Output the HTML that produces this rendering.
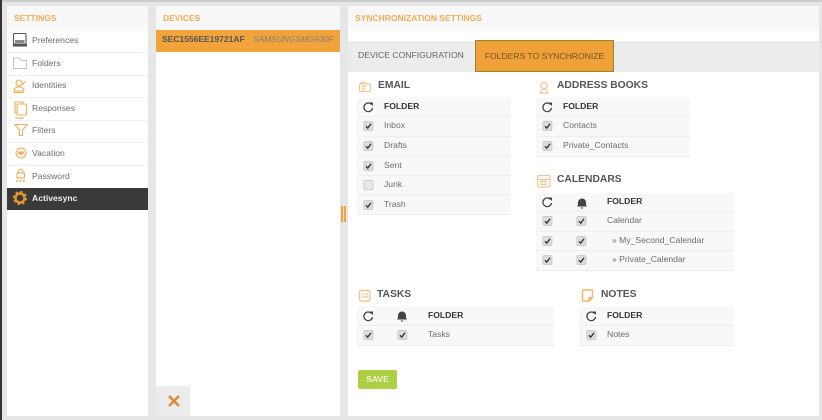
<!DOCTYPE html>
<html>
<head>
<meta charset="utf-8">
<style>
html,body{margin:0;padding:0}
body{width:822px;height:420px;overflow:hidden;position:relative;background:#e6e6e6;font-family:"Liberation Sans",sans-serif;font-size:9px;color:#666}
#w{position:absolute;left:0;top:0;width:822px;height:420px;overflow:hidden;background:#e6e6e6;filter:blur(.35px)}
.a{position:absolute}
.p{position:absolute;background:#fff}
.hd{position:absolute;background:#f8f8f8;height:24px;top:6px;color:#f4ab52;font-weight:bold;font-size:8.5px;line-height:24px}
.m{position:absolute;left:7px;width:141px;height:22px;border-bottom:1px solid #f0f0f0;line-height:21px;color:#6c6c6c;font-size:8.6px}
.m span{position:absolute;left:25px}
.r{position:absolute;background:#f8f8f8;border-bottom:1px solid #eee;box-sizing:border-box}
.t{position:absolute;line-height:12px;white-space:nowrap;font-size:8.6px;color:#6c6c6c}
.f{position:absolute;line-height:12px;font-weight:bold;font-size:8.6px;color:#333}
.h{position:absolute;line-height:14px;font-weight:bold;font-size:10.3px;color:#555;white-space:nowrap}
.c{position:absolute;width:8px;height:8px;background:#ddd;border:.5px solid #ccc;border-radius:2px;transform:translate(-.6px,-1px)}
.c svg{position:absolute;left:0;top:0}
svg{position:absolute;overflow:visible}
</style>
</head>
<body>
<div id="w">
<div class="a" style="left:0;top:0;width:822px;height:2px;background:#ccc"></div>
<div class="a" style="left:0;top:0;width:2px;height:420px;background:#333"></div>

<!-- Settings panel -->
<div class="p" style="left:7px;top:6px;width:141px;height:410px"></div>
<div class="hd" style="left:7px;width:141px;text-indent:7px">SETTINGS</div>
<div class="m" style="top:30px"><span>Preferences</span></div>
<div class="m" style="top:52.6px"><span>Folders</span></div>
<div class="m" style="top:75.2px"><span>Identities</span></div>
<div class="m" style="top:97.8px"><span>Responses</span></div>
<div class="m" style="top:120.4px"><span>Filters</span></div>
<div class="m" style="top:143px"><span>Vacation</span></div>
<div class="m" style="top:165.6px"><span>Password</span></div>
<div class="a" style="left:7px;top:188px;width:141px;height:22px;background:#3a3a3a;color:#eee;font-weight:bold;line-height:20px;font-size:8.6px"><span class="a" style="left:25px">Activesync</span></div>

<!-- left icons -->
<svg style="left:0;top:0" width="160" height="215">
  <g fill="none" stroke="#555" stroke-width="1.100">
    <rect x="13.500" y="33.500" width="12.500" height="10.500" rx="1"/>
    <rect x="13.500" y="44.500" width="13" height="1.500" fill="#555"/>
  </g>
  <rect x="15" y="40" width="9.500" height="3" fill="#888"/>
  <path d="M13.500 58h6l2 2.500h5v8h-13z" fill="none" stroke="#c4c4c4" stroke-width="1"/>
  <g fill="none" stroke="#f4ab52" stroke-width="1.100">
    <circle cx="19" cy="83" r="3"/>
    <path d="M14 91c0-3 2-4 5-4s5 1 5 4zM22 85l4-4"/>
    <path d="M14 92.500h10"/>
    <rect x="17" y="104" width="9.500" height="11" rx="1.500"/>
    <path d="M17 113h-2v-11h8v2"/>
    <path d="M15 118h9"/>
    <path d="M15 124.500h12l-4.500 6v5h-3v-5z"/>
    <circle cx="21" cy="153" r="5"/>
    <path d="M18.500 152a2.500 2.500 0 0 0 5 0z" fill="#f4ab52"/>
    <rect x="17" y="173" width="7.500" height="5" fill="none"/>
    <path d="M18.500 173v-1.500a2.200 2.200 0 0 1 4.400 0v1.500"/>
  </g>
  <g fill="#f4ab52">
    <circle cx="17" cy="181" r="1"/><circle cx="20.500" cy="181" r="1"/><circle cx="24" cy="181" r="1"/>
  </g>
  <circle cx="20" cy="198" r="4.500" fill="none" stroke="#e6962f" stroke-width="2.400"/>
  <circle cx="20" cy="198" r="6.300" fill="none" stroke="#e6962f" stroke-width="1.600" stroke-dasharray="2.500 2.450"/>
</svg>

<!-- Devices panel -->
<div class="p" style="left:156px;top:6px;width:184px;height:410px"></div>
<div class="hd" style="left:156px;width:184px;text-indent:7px">DEVICES</div>
<div class="a" style="left:156px;top:30px;width:184px;height:22px;background:#f2a33c;line-height:18px;white-space:nowrap">
  <span class="a" style="left:6px;font-weight:bold;font-size:8.5px;color:#555">SEC1556EE19721AF</span>
  <span class="a" style="left:97px;font-style:italic;font-size:8.4px;color:#857f74">SAMSUNGSMG930F</span>
</div>
<div class="a" style="left:156px;top:386px;width:34px;height:30px;background:#ececec"></div>
<svg style="left:156px;top:386px" width="34" height="30"><path d="M13 10l10 10M23 10l-10 10" stroke="#d98f3a" stroke-width="2.600" fill="none"/></svg>
<div class="a" style="left:341px;top:206px;width:1.500px;height:16px;background:#f2a33c"></div>
<div class="a" style="left:344px;top:206px;width:1.500px;height:16px;background:#f2a33c"></div>

<!-- Main panel -->
<div class="p" style="left:348px;top:6px;width:471px;height:410px"></div>
<div class="hd" style="left:348px;width:471px;text-indent:7px">SYNCHRONIZATION SETTINGS</div>
<div class="a" style="left:348px;top:41px;width:471px;height:31px;background:#ececec"></div>
<div class="a" style="left:358px;top:49px;line-height:12px;font-size:8.6px;color:#666">DEVICE CONFIGURATION</div>
<div class="a" style="left:475px;top:40px;height:30px;background:#f0a138;border:1px solid #9a8436;width:137px;line-height:30px;text-align:center;font-size:8.6px;color:#6a5530">FOLDERS TO SYNCHRONIZE</div>

<!-- Section icons -->
<svg style="left:0;top:0" width="822" height="420">
  <g fill="none" stroke="#f7c48a" stroke-width="1.200">
    <rect x="359.500" y="84" width="11" height="7.500" rx="1"/>
    <path d="M361.500 86.500h5M361.500 89h4M360 84l1-1.500h4l1 1.500"/>
    <circle cx="544" cy="85.500" r="3.200"/>
    <path d="M540 93c1-3 2-4 4-4s3 1 4 4z"/>
    <rect x="537.500" y="175.500" width="12.500" height="11.500" rx="1.500"/>
    <path d="M537.500 179.500h12.500M541 181.500h5v3h-5z"/>
    <rect x="359.500" y="290.500" width="10.500" height="10.500" rx="1.500" stroke-width="1.400"/>
    <path d="M362 294h2M365 294h3M362 297h6"/>
    <path d="M582.500 290h10v7.500l-3.500 3.500h-6.500z" stroke="#f7b56a" stroke-width="1.500"/>
    <path d="M589 301l3.500-3.500h-3.500z" fill="#f7b56a" stroke="#f7b56a"/>
  </g>
</svg>
<div class="h" style="left:378px;top:79px">EMAIL</div>
<div class="h" style="left:557px;top:79px">ADDRESS BOOKS</div>
<div class="h" style="left:557px;top:173px">CALENDARS</div>
<div class="h" style="left:377px;top:288px">TASKS</div>
<div class="h" style="left:601px;top:288px">NOTES</div>

<!-- Table backgrounds -->
<div class="r" style="left:357px;top:98px;width:154px;height:19px"></div>
<div class="r" style="left:357px;top:117px;width:154px;height:20px"></div>
<div class="r" style="left:357px;top:137px;width:154px;height:19px"></div>
<div class="r" style="left:357px;top:156px;width:154px;height:20px"></div>
<div class="r" style="left:357px;top:176px;width:154px;height:19px"></div>
<div class="r" style="left:357px;top:195px;width:154px;height:20px"></div>

<div class="r" style="left:536px;top:98px;width:154px;height:19px"></div>
<div class="r" style="left:536px;top:117px;width:154px;height:20px"></div>
<div class="r" style="left:536px;top:137px;width:154px;height:20px"></div>

<div class="r" style="left:536px;top:193px;width:198px;height:19px"></div>
<div class="r" style="left:536px;top:212px;width:198px;height:20px"></div>
<div class="r" style="left:536px;top:232px;width:198px;height:19px"></div>
<div class="r" style="left:536px;top:251px;width:198px;height:20px"></div>

<div class="r" style="left:357px;top:307px;width:197px;height:19px"></div>
<div class="r" style="left:357px;top:326px;width:197px;height:20px"></div>
<div class="r" style="left:579px;top:307px;width:155px;height:19px"></div>
<div class="r" style="left:579px;top:326px;width:155px;height:20px"></div>

<!-- Sync and bell icons -->
<svg style="left:0;top:0" width="822" height="420">
  <g fill="none" stroke="#444" stroke-width="1.300">
    <path d="M371.500 104.500a4.300 4.300 0 1 0 1 3.500"/>
    <path d="M550.500 104.500a4.300 4.300 0 1 0 1 3.500"/>
    <path d="M550.500 199.500a4.300 4.300 0 1 0 1 3.500"/>
    <path d="M371.500 313.500a4.300 4.300 0 1 0 1 3.500"/>
    <path d="M594.500 313.500a4.300 4.300 0 1 0 1 3.500"/>
  </g>
  <g fill="#444">
    <path d="M369.500 102.500h3.500v3.500z"/>
    <path d="M548.500 102.500h3.500v3.500z"/>
    <path d="M548.500 197.500h3.500v3.500z"/>
    <path d="M369.500 311.500h3.500v3.500z"/>
    <path d="M592.500 311.500h3.500v3.500z"/>
    <path d="M577 206.500c0-.5 1-1 1-2v-2a4 4 0 0 1 8 0v2c0 1 1 1.500 1 2zM580.500 207.500h3l-1.500 1.500z"/>
    <path d="M397 319.500c0-.5 1-1 1-2v-2a4 4 0 0 1 8 0v2c0 1 1 1.500 1 2zM400.500 320.500h3l-1.500 1.500z"/>
  </g>
</svg>

<div class="f" style="left:384px;top:100px">FOLDER</div>
<div class="f" style="left:563px;top:100px">FOLDER</div>
<div class="f" style="left:607px;top:195px">FOLDER</div>
<div class="f" style="left:428px;top:309px">FOLDER</div>
<div class="f" style="left:607px;top:309px">FOLDER</div>

<div class="t" style="left:384px;top:119px">Inbox</div>
<div class="t" style="left:384px;top:139px">Drafts</div>
<div class="t" style="left:384px;top:159px">Sent</div>
<div class="t" style="left:384px;top:178px">Junk</div>
<div class="t" style="left:384px;top:198px">Trash</div>
<div class="t" style="left:563px;top:119px">Contacts</div>
<div class="t" style="left:563px;top:139px">Private_Contacts</div>
<div class="t" style="left:607px;top:214px">Calendar</div>
<div class="t" style="left:612px;top:234px">» My_Second_Calendar</div>
<div class="t" style="left:612px;top:253px">» Private_Calendar</div>
<div class="t" style="left:428px;top:328px">Tasks</div>
<div class="t" style="left:607px;top:328px">Notes</div>

<!-- Checkboxes -->
<div class="c" style="left:364px;top:122px"><svg width="8" height="8"><path d="M1.500 4.200l1.800 2 3.300-4.400" fill="none" stroke="#333" stroke-width="1.300"/></svg></div>
<div class="c" style="left:364px;top:142px"><svg width="8" height="8"><path d="M1.500 4.200l1.800 2 3.300-4.400" fill="none" stroke="#333" stroke-width="1.300"/></svg></div>
<div class="c" style="left:364px;top:162px"><svg width="8" height="8"><path d="M1.500 4.200l1.800 2 3.300-4.400" fill="none" stroke="#333" stroke-width="1.300"/></svg></div>
<div class="c" style="left:364px;top:181px;background:#e8e8e8"></div>
<div class="c" style="left:364px;top:201px"><svg width="8" height="8"><path d="M1.500 4.200l1.800 2 3.300-4.400" fill="none" stroke="#333" stroke-width="1.300"/></svg></div>

<div class="c" style="left:543px;top:122px"><svg width="8" height="8"><path d="M1.500 4.200l1.800 2 3.300-4.400" fill="none" stroke="#333" stroke-width="1.300"/></svg></div>
<div class="c" style="left:543px;top:142px"><svg width="8" height="8"><path d="M1.500 4.200l1.800 2 3.300-4.400" fill="none" stroke="#333" stroke-width="1.300"/></svg></div>

<div class="c" style="left:543px;top:217px"><svg width="8" height="8"><path d="M1.500 4.200l1.800 2 3.300-4.400" fill="none" stroke="#333" stroke-width="1.300"/></svg></div>
<div class="c" style="left:577px;top:217px"><svg width="8" height="8"><path d="M1.500 4.200l1.800 2 3.300-4.400" fill="none" stroke="#333" stroke-width="1.300"/></svg></div>
<div class="c" style="left:543px;top:237px"><svg width="8" height="8"><path d="M1.500 4.200l1.800 2 3.300-4.400" fill="none" stroke="#333" stroke-width="1.300"/></svg></div>
<div class="c" style="left:577px;top:237px"><svg width="8" height="8"><path d="M1.500 4.200l1.800 2 3.300-4.400" fill="none" stroke="#333" stroke-width="1.300"/></svg></div>
<div class="c" style="left:543px;top:256px"><svg width="8" height="8"><path d="M1.500 4.200l1.800 2 3.300-4.400" fill="none" stroke="#333" stroke-width="1.300"/></svg></div>
<div class="c" style="left:577px;top:256px"><svg width="8" height="8"><path d="M1.500 4.200l1.800 2 3.300-4.400" fill="none" stroke="#333" stroke-width="1.300"/></svg></div>

<div class="c" style="left:364px;top:331px"><svg width="8" height="8"><path d="M1.500 4.200l1.800 2 3.300-4.400" fill="none" stroke="#333" stroke-width="1.300"/></svg></div>
<div class="c" style="left:398px;top:331px"><svg width="8" height="8"><path d="M1.500 4.200l1.800 2 3.300-4.400" fill="none" stroke="#333" stroke-width="1.300"/></svg></div>
<div class="c" style="left:587px;top:331px"><svg width="8" height="8"><path d="M1.500 4.200l1.800 2 3.300-4.400" fill="none" stroke="#333" stroke-width="1.300"/></svg></div>

<!-- Save -->
<div class="a" style="left:358px;top:370px;width:39px;height:19px;background:#aecf44;border-radius:2px;color:#eef5d0;font-weight:bold;font-size:8.6px;line-height:19px;text-align:center">SAVE</div>
</div>
</body>
</html>
